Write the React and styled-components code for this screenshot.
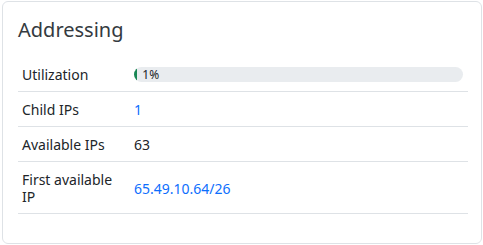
import styled, { createGlobalStyle } from 'styled-components'

const GlobalStyle = createGlobalStyle`
  body {
    margin: 0;
    background: #ffffff;
    font-family: 'Noto Sans', 'Open Sans', sans-serif;
    color: #212529;
  }
`

const Card = styled.div`
  margin: 1px 1px 0 2px;
  border: 1px solid #dee2e6;
  border-radius: 6px;
  padding: 16px 14px 29px 15px;
  background: #ffffff;
`

const Title = styled.h5`
  margin: 0 0 15px;
  font-size: 20px;
  font-weight: 400;
  line-height: 24px;
  color: #343a40;
`

const Table = styled.table`
  width: 450px;
  border-collapse: collapse;
  font-size: 14px;
  line-height: 17px;
`

const Row = styled.tr`
  border-bottom: 1px solid #dee2e6;
`

const Label = styled.th`
  width: 104px;
  padding: 9px 4px 8px;
  text-align: left;
  font-weight: 400;
  vertical-align: middle;
`

const Value = styled.td`
  padding: 9px 4px 8px;
  vertical-align: middle;
`

const Link = styled.a`
  color: #0d6efd;
  text-decoration: none;
`

const Progress = styled.div`
  display: flex;
  height: 15px;
  width: 329px;
  background: #e9ecef;
  border-radius: 8px;
  overflow: hidden;
  font-size: 12px;
  line-height: 15px;
`

const Bar = styled.div`
  background: #198754;
  flex-shrink: 0;
`

const BarText = styled.span`
  padding-left: 5px;
  color: #212529;
`

function App() {
  const used = 1
  return (
    <>
      <GlobalStyle />
      <Card>
        <Title>Addressing</Title>
        <Table>
          <tbody>
            <Row>
              <Label>Utilization</Label>
              <Value>
                <Progress>
                  <Bar style={{ width: `${used}%` }} />
                  <BarText>{used}%</BarText>
                </Progress>
              </Value>
            </Row>
            <Row>
              <Label>Child IPs</Label>
              <Value>
                <Link href="#">1</Link>
              </Value>
            </Row>
            <Row>
              <Label>Available IPs</Label>
              <Value>63</Value>
            </Row>
            <Row>
              <Label>First available IP</Label>
              <Value>
                <Link href="#">65.49.10.64/26</Link>
              </Value>
            </Row>
          </tbody>
        </Table>
      </Card>
    </>
  )
}

export default App
